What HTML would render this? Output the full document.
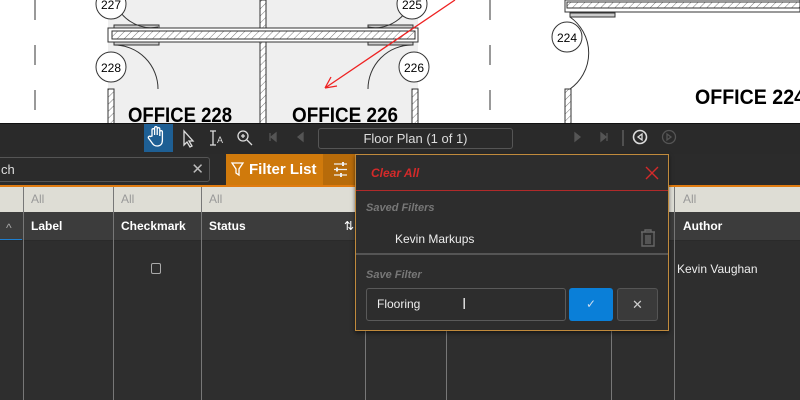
<!DOCTYPE html>
<html><head><style>
*{margin:0;padding:0;box-sizing:border-box}
body{width:800px;height:400px;overflow:hidden;background:#2e2e2e;font-family:"Liberation Sans",sans-serif;position:relative}
.a{position:absolute}
.t{color:#fff;font-size:13px}
</style></head><body>
<svg class="a" style="left:0;top:0" width="800" height="124">
<defs><pattern id="h" width="5" height="5" patternUnits="userSpaceOnUse" patternTransform="rotate(45)"><rect width="5" height="5" fill="#fff"/><line x1="0" y1="0" x2="0" y2="5" stroke="#555" stroke-width="0.8"/></pattern></defs>
<rect width="800" height="124" fill="#fff"/>
<rect x="108" y="0" width="310" height="124" fill="#efefef"/>
<g stroke="#333" fill="none" stroke-width="1">
<line x1="35" y1="0" x2="35" y2="124" stroke-dasharray="20,25"/>
<line x1="490" y1="0" x2="490" y2="124" stroke-dasharray="20,25"/>
<rect x="108" y="28" width="310" height="14" fill="#fff"/>
<rect x="112" y="31" width="303" height="8" fill="url(#h)"/>
<rect x="114" y="25" width="45" height="3" fill="#ccc"/><rect x="114" y="42" width="45" height="3" fill="#ccc"/>
<rect x="368" y="25" width="45" height="3" fill="#ccc"/><rect x="368" y="42" width="45" height="3" fill="#ccc"/>
<rect x="108" y="89" width="6" height="35" fill="url(#h)"/>
<rect x="260" y="0" width="6" height="28" fill="url(#h)"/>
<rect x="260" y="42" width="6" height="82" fill="url(#h)"/>
<rect x="412" y="89" width="6" height="35" fill="url(#h)"/>
<path d="M114 45 A44 44 0 0 1 158 89"/>
<path d="M114 -2 A38 38 0 0 0 158 27"/>
<path d="M412 45 A44 44 0 0 0 368 89"/>
<path d="M412 -2 A38 38 0 0 1 368 27"/>
<circle cx="111" cy="4" r="15" fill="#fff"/><circle cx="111" cy="67" r="15" fill="#fff"/>
<circle cx="412" cy="4" r="15" fill="#fff"/><circle cx="414" cy="67" r="15" fill="#fff"/>
<rect x="565" y="0" width="235" height="12" fill="#fff"/>
<rect x="567" y="2" width="233" height="6" fill="url(#h)"/>
<rect x="570" y="13" width="45" height="4" fill="#ccc"/>
<path d="M570 17 A44 44 0 0 1 570 89"/>
<rect x="565" y="89" width="6" height="35" fill="url(#h)"/>
<circle cx="567" cy="37" r="15" fill="#fff"/>
</g>
<g font-family="Liberation Sans" font-size="12" text-anchor="middle">
<text x="111" y="9">227</text><text x="111" y="72">228</text><text x="412" y="9">225</text><text x="414" y="72">226</text><text x="567" y="42">224</text>
</g>
<g font-family="Liberation Sans" font-weight="bold" font-size="21">
<text x="128" y="122" textLength="104" lengthAdjust="spacingAndGlyphs">OFFICE 228</text><text x="292" y="122" textLength="106" lengthAdjust="spacingAndGlyphs">OFFICE 226</text><text x="695" y="104" textLength="110" lengthAdjust="spacingAndGlyphs">OFFICE 224</text>
</g>
<path d="M455 0 L325 88 M325 88 L331 77 M325 88 L337 86" stroke="#e22" stroke-width="1.3" fill="none"/>
</svg>
<div class="a" style="left:0;top:123px;width:800px;height:31px;background:#2a2a2a;border-top:1px solid #111"></div>
<div class="a" style="left:144px;top:124px;width:29px;height:28px;background:#1e5f94"></div>
<svg class="a" style="left:0;top:124px" width="800" height="29" fill="none" stroke="#ddd" stroke-width="1.3">
<path d="M152 12 v-6 a1.3 1.3 0 0 1 2.6 0 v5 v-7 a1.3 1.3 0 0 1 2.6 0 v7 v-6 a1.3 1.3 0 0 1 2.6 0 v7 v-4 a1.3 1.3 0 0 1 2.6 0 v8 c0 4 -2 6 -5 6 c-3 0 -4 -1 -6 -4 l-3 -4 a1.3 1.3 0 0 1 2 -1.5 z" stroke="#fff"/>
<path d="M184 7 v14 l3 -3 l3 5 l2 -1 l-3 -5 h4 z"/>
<path d="M210 7 h6 M213 7 v14 M210 21 h6"/><text x="217" y="19" font-size="9" fill="#ddd" stroke="none" font-family="Liberation Sans">A</text>
<circle cx="243" cy="12" r="5"/><path d="M247 16 l5 5 M241 12 h4 M243 10 v4"/>
<g stroke="#555"><path d="M270 9 v8 M276 9 l-5 4 l5 4 z" fill="#555"/><path d="M303 9 l-5 4 l5 4 z" fill="#555"/>
<path d="M575 9 l5 4 l-5 4 z" fill="#555"/><path d="M601 9 l5 4 l-5 4 z M607 9 v8" fill="#555"/></g>
<line x1="623" y1="6" x2="623" y2="22" stroke="#666"/>
<circle cx="640" cy="13" r="6.5" stroke-width="1.6"/><path d="M642 10 l-4 3 l4 3 z"/>
<circle cx="669" cy="13" r="6.5" stroke="#555"/><path d="M667 10 l4 3 l-4 3 z" stroke="#555"/>
</svg>
<div class="a t" style="left:318px;top:128px;width:195px;height:21px;border:1px solid #555;border-radius:3px;text-align:center;line-height:19px;color:#ddd">Floor Plan (1 of 1)</div>
<div class="a" style="left:0;top:154px;width:800px;height:31px;background:#2b2b2b"></div>
<div class="a t" style="left:-4px;top:157px;width:214px;height:25px;border:1px solid #555;border-radius:3px;line-height:23px;padding-left:4px;color:#ddd">ch<span style="position:absolute;right:5px;color:#bbb;font-size:15px">✕</span></div>
<div class="a" style="left:226px;top:154px;width:97px;height:31px;background:#d07a0c;color:#fff;font-weight:bold;font-size:15px;line-height:31px;padding-left:23px">Filter List</div>
<svg class="a" style="left:226px;top:154px" width="130" height="31" fill="none" stroke="#fff" stroke-width="1.3">
<path d="M6 9 h11 l-4 6 v6 l-3 -2 v-4 z"/>
<rect x="97" y="0" width="33" height="31" fill="#b76b0a" stroke="none"/>
<path d="M108 10 h13 M108 15.5 h13 M108 21 h13" stroke="#eee"/>
<path d="M117 8 v4 M111 13.5 v4 M115 19 v4" stroke="#eee" stroke-width="2"/>
</svg>
<div class="a" style="left:0;top:185px;width:800px;height:2px;background:#e07b10"></div>
<div class="a" style="left:0;top:187px;width:800px;height:25px;background:#deddd5"></div>
<div class="a" style="left:0;top:212px;width:800px;height:28px;background:#3c3c3c"></div>
<div class="a" style="left:0;top:239px;width:22px;height:2px;background:#1e7fd0"></div>
<div class="a" style="left:0;top:240px;width:800px;height:1px;background:#2a2a2a"></div>
<div style="color:#999;font-size:12px">
<div class="a" style="left:31px;top:192px">All</div><div class="a" style="left:121px;top:192px">All</div><div class="a" style="left:209px;top:192px">All</div><div class="a" style="left:683px;top:192px">All</div></div>
<div style="color:#fff;font-size:12px;font-weight:bold">
<div class="a" style="left:31px;top:219px">Label</div><div class="a" style="left:121px;top:219px">Checkmark</div><div class="a" style="left:209px;top:219px">Status</div><div class="a" style="left:683px;top:219px">Author</div><div class="a" style="left:6px;top:221px;color:#aaa;font-weight:normal">^</div><div class="a" style="left:344px;top:219px;font-weight:normal">⇅</div></div>
<div class="a" style="left:23px;top:187px;width:1px;height:213px;background:#777"></div>
<div class="a" style="left:113px;top:187px;width:1px;height:213px;background:#777"></div>
<div class="a" style="left:201px;top:187px;width:1px;height:213px;background:#777"></div>
<div class="a" style="left:365px;top:300px;width:1px;height:100px;background:#777"></div>
<div class="a" style="left:446px;top:300px;width:1px;height:100px;background:#777"></div>
<div class="a" style="left:611px;top:300px;width:1px;height:100px;background:#777"></div>
<div class="a" style="left:674px;top:187px;width:1px;height:213px;background:#777"></div>
<div class="a" style="left:151px;top:263px;width:10px;height:11px;border:1px solid #aaa;border-radius:2px"></div>
<div class="a t" style="left:677px;top:262px;font-size:12px;color:#eee">Kevin Vaughan</div>
<div class="a" style="left:355px;top:154px;width:314px;height:177px;background:#2d2d2d;border:1px solid #c08a3c;box-shadow:0 2px 4px #0008">
<div class="a" style="left:15px;top:11px;color:#d42a2a;font-style:italic;font-weight:bold;font-size:12px">Clear All</div>
<svg class="a" style="left:289px;top:11px" width="14" height="14" stroke="#d42a2a" stroke-width="1.4"><path d="M1 1 L13 13 M13 1 L1 13"/></svg>
<div class="a" style="left:0;top:35px;width:312px;height:1px;background:#b02a2a"></div>
<div class="a" style="left:10px;top:47px;color:#777;font-style:italic;font-weight:bold;font-size:11px">Saved Filters</div>
<div class="a" style="left:39px;top:77px;color:#eee;font-size:12px">Kevin Markups</div>
<svg class="a" style="left:283px;top:74px" width="18" height="19" fill="none" stroke="#666" stroke-width="1.4"><path d="M2 3 h14 M6 3 v-2 h6 v2 M3 3 v14 h12 v-14 M7 6 v9 M9 6 v9 M11 6 v9"/></svg>
<div class="a" style="left:0;top:98px;width:312px;height:2px;background:#555"></div>
<div class="a" style="left:10px;top:114px;color:#777;font-style:italic;font-weight:bold;font-size:11px">Save Filter</div>
<div class="a" style="left:10px;top:133px;width:200px;height:33px;border:1px solid #5a5a5a;border-radius:3px;color:#eee;font-size:12px;line-height:31px;padding-left:10px">Flooring<span style="position:absolute;left:95px;color:#ddd;font-size:16px">I</span></div>
<div class="a" style="left:213px;top:133px;width:44px;height:33px;background:#0a7fd8;border-radius:3px;color:#cde;text-align:center;line-height:33px;font-size:12px">✓</div>
<div class="a" style="left:261px;top:133px;width:41px;height:33px;background:#3a3a3a;border:1px solid #555;border-radius:3px;color:#ccc;text-align:center;line-height:31px;font-size:13px">✕</div>
</div>
</body></html>
